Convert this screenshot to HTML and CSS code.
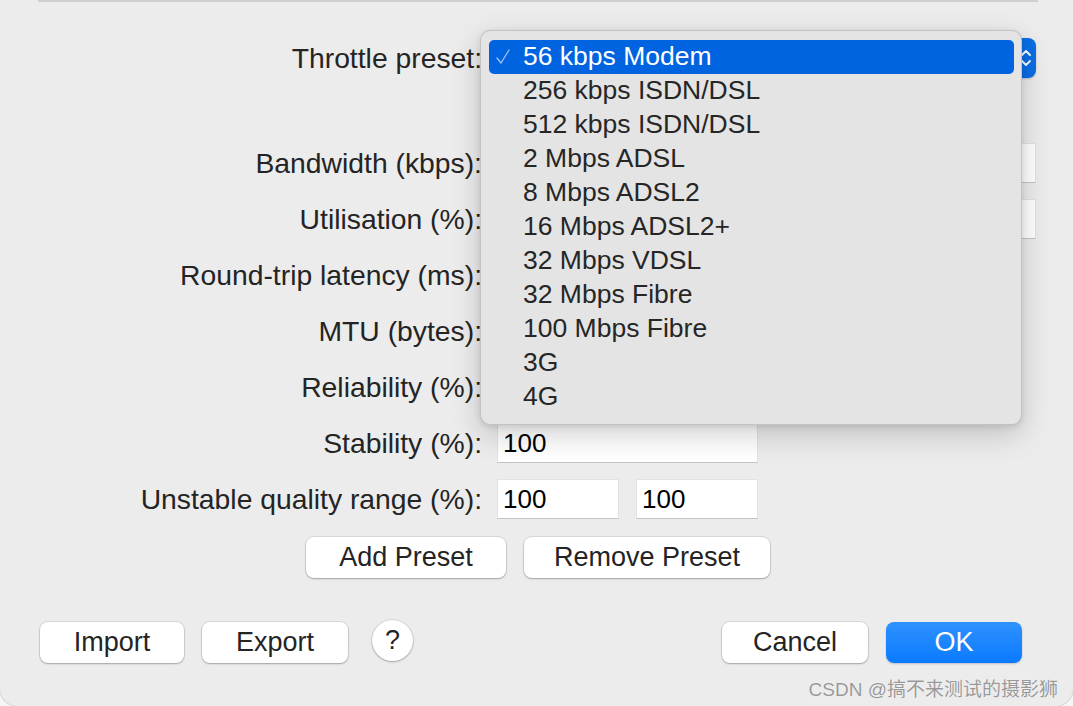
FILE: index.html
```html
<!DOCTYPE html>
<html lang="en">
<head>
    <meta charset="UTF-8">
    <meta name="viewport" content="width=device-width, initial-scale=1.0">
    <title>Throttle Settings</title>
    <link rel="stylesheet" href="styles.css">
</head>
<body>
    <div class="window">
        <div class="tab-edge"></div>

        <div class="form">
            <div class="label">Throttle preset:</div>
            <div class="popup">
                <svg class="popup-arrows" width="12" height="22" viewBox="0 0 12 22">
                    <polyline points="2,8 6,4 10,8" fill="none" stroke="#fff" stroke-width="1.8" stroke-linecap="round" stroke-linejoin="round"/>
                    <polyline points="2,14 6,18 10,14" fill="none" stroke="#fff" stroke-width="1.8" stroke-linecap="round" stroke-linejoin="round"/>
                </svg>
            </div>

            <div class="spacer"></div>

            <div class="label">Bandwidth (kbps):</div>
            <input class="field wide" type="text" value="56">

            <div class="label">Utilisation (%):</div>
            <input class="field wide" type="text" value="90">

            <div class="label">Round-trip latency (ms):</div>
            <input class="field" type="text" value="200">

            <div class="label">MTU (bytes):</div>
            <input class="field" type="text" value="576">

            <div class="label">Reliability (%):</div>
            <input class="field" type="text" value="100">

            <div class="label">Stability (%):</div>
            <input class="field" type="text" value="100">

            <div class="label">Unstable quality range (%):</div>
            <div class="pair">
                <input class="field small" type="text" value="100">
                <input class="field small" type="text" value="100">
            </div>
        </div>

        <div class="preset-actions">
            <button class="btn add-btn">Add Preset</button>
            <button class="btn remove-btn">Remove Preset</button>
        </div>

        <div class="footer">
            <div class="footer-left">
                <button class="btn import-btn">Import</button>
                <button class="btn export-btn">Export</button>
                <button class="help-btn">?</button>
            </div>
            <div class="footer-right">
                <button class="btn cancel-btn">Cancel</button>
                <button class="btn ok-btn">OK</button>
            </div>
        </div>

        <!-- menu desplegado del preset -->
        <ul class="menu">
            <li class="selected">
                <svg class="check" width="16" height="16" viewBox="0 0 16 16">
                    <polyline points="2,9 6,14 14,1" fill="none" stroke="rgba(255,255,255,0.6)" stroke-width="1.4" stroke-linecap="round" stroke-linejoin="round"/>
                </svg>
                56 kbps Modem
            </li>
            <li>256 kbps ISDN/DSL</li>
            <li>512 kbps ISDN/DSL</li>
            <li>2 Mbps ADSL</li>
            <li>8 Mbps ADSL2</li>
            <li>16 Mbps ADSL2+</li>
            <li>32 Mbps VDSL</li>
            <li>32 Mbps Fibre</li>
            <li>100 Mbps Fibre</li>
            <li>3G</li>
            <li>4G</li>
        </ul>

        <div class="watermark">CSDN @搞不来测试的摄影狮</div>
    </div>
</body>
</html>
```

FILE: styles.css
```css
body {
    margin: 0;
    padding: 0;
    background-color: #f6f6f6;
    font-family: "Liberation Sans", Arial, "Noto Sans CJK SC", sans-serif;
    color: #242424;
}

.window {
    position: relative;
    width: 1073px;
    height: 706px;
    background-color: #ececec;
    border-radius: 0 0 18px 18px;
    box-shadow: 0 0 0 1px #d4d4d4;
    overflow: hidden;
}

.tab-edge {
    height: 2px;
    margin: 0 35px 0 38px;
    background-color: #cfcfcf;
}

.form {
    display: grid;
    grid-template-columns: 482px 539px;
    grid-template-rows: 40px 33px repeat(7, 40px);
    column-gap: 15px;
    row-gap: 16px;
    padding-top: 36px;
}

.label {
    align-self: center;
    text-align: right;
    font-size: 28.3px;
    line-height: 32px;
    color: #242424;
}

.spacer {
    grid-column: 1 / -1;
}

.popup {
    display: flex;
    justify-content: flex-end;
    align-items: center;
    background-color: #0a6ee6;
    border-radius: 8px;
    box-shadow: 0 1px 2px rgba(0, 0, 0, 0.2);
    padding-right: 4px;
}

.field {
    box-sizing: border-box;
    width: 261px;
    height: 40px;
    padding: 0 5px;
    border: 1px solid #e2e2e2;
    border-bottom-color: #c4c4c4;
    background-color: #ffffff;
    font-family: "Liberation Sans", Arial, sans-serif;
    font-size: 26px;
    color: #000;
    outline: none;
}

.field.wide {
    width: 539px;
}

.pair {
    display: flex;
    gap: 17px;
}

.field.small {
    width: 122px;
}

.preset-actions {
    display: flex;
    gap: 18px;
    margin-top: 18px;
    padding-left: 306px;
}

.btn {
    height: 41px;
    background-color: #ffffff;
    border: none;
    border-radius: 8px;
    box-shadow: 0 0 0 1px rgba(0, 0, 0, 0.08), 0 1px 2px rgba(0, 0, 0, 0.25);
    font-family: "Liberation Sans", Arial, sans-serif;
    font-size: 27px;
    color: #242424;
    padding: 0;
}

.add-btn {
    width: 200px;
}

.remove-btn {
    width: 246px;
}

.footer {
    display: flex;
    justify-content: space-between;
    align-items: center;
    margin-top: 44px;
    padding: 0 51px 0 40px;
}

.footer-left,
.footer-right {
    display: flex;
    align-items: center;
    gap: 18px;
}

.import-btn {
    width: 144px;
}

.export-btn {
    width: 146px;
}

.help-btn {
    width: 41px;
    height: 41px;
    margin-left: 6px;
    margin-top: -4px;
    border: none;
    border-radius: 50%;
    background-color: #ffffff;
    box-shadow: 0 0 0 1px rgba(0, 0, 0, 0.08), 0 1px 2px rgba(0, 0, 0, 0.25);
    font-family: "Liberation Sans", Arial, sans-serif;
    font-size: 27px;
    color: #242424;
    padding: 0;
}

.cancel-btn {
    width: 146px;
}

.ok-btn {
    width: 136px;
    background: linear-gradient(#2f92fd, #0a7aff);
    box-shadow: 0 1px 2px rgba(0, 0, 0, 0.2);
    color: #ffffff;
}

.menu {
    position: absolute;
    left: 480px;
    top: 30px;
    width: 542px;
    box-sizing: border-box;
    margin: 0;
    padding: 9px 7px 10px 8px;
    list-style-type: none;
    background-color: #e3e4e3;
    border: 1px solid rgba(0, 0, 0, 0.14);
    border-radius: 10px;
    box-shadow: 0 10px 30px rgba(0, 0, 0, 0.18), 0 2px 6px rgba(0, 0, 0, 0.1);
}

.menu li {
    position: relative;
    height: 34px;
    line-height: 33px;
    padding-left: 34px;
    font-size: 26.5px;
    color: #262626;
    border-radius: 5px;
}

.menu li.selected {
    background-color: #0064e1;
    color: #ffffff;
}

.check {
    position: absolute;
    left: 6px;
    top: 9px;
}

.watermark {
    position: absolute;
    right: 15px;
    bottom: 5px;
    font-family: "Liberation Sans", "Noto Sans CJK SC", sans-serif;
    font-size: 19px;
    color: rgba(120, 120, 120, 0.75);
    text-shadow: 0 0 1px rgba(255, 255, 255, 0.8);
}
```
